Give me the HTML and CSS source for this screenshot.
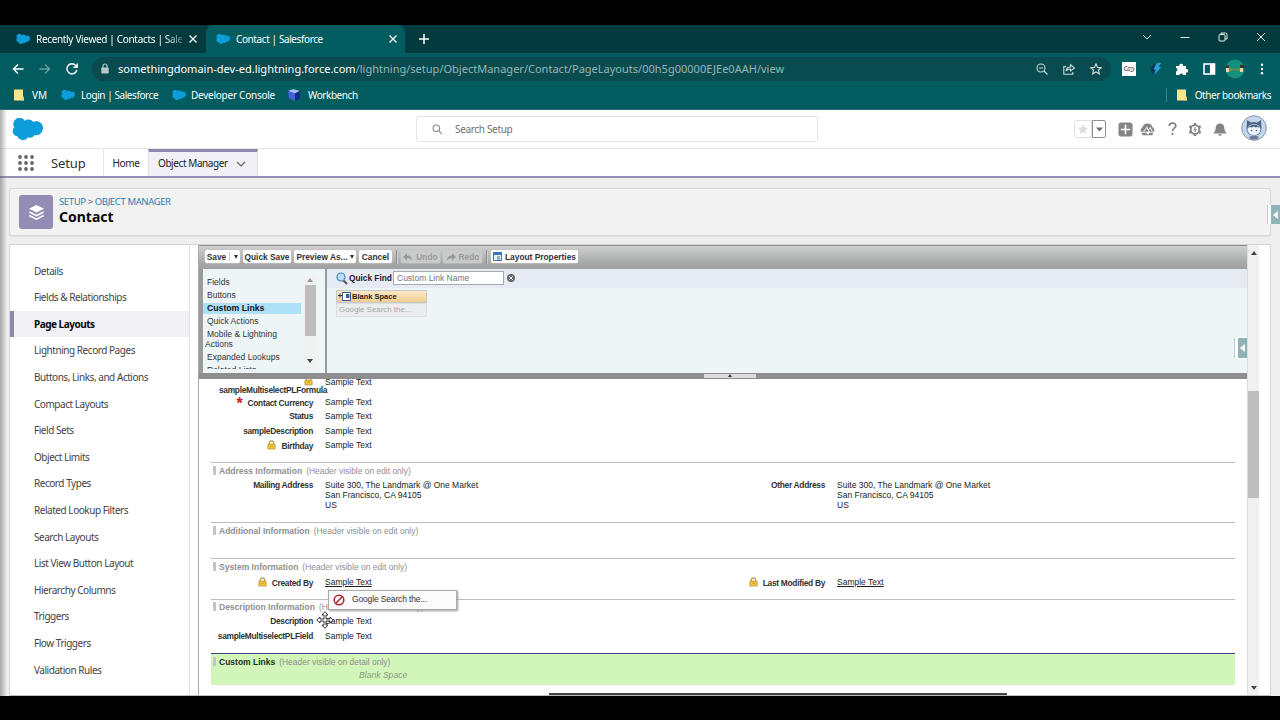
FILE: index.html
```html
<!DOCTYPE html>
<html lang="en">
<head>
<meta charset="utf-8">
<title>Contact | Salesforce</title>
<link rel="stylesheet" href="styles.css">
</head>
<body>
<svg class="defs" aria-hidden="true">
  <symbol id="cloud" viewBox="0 0 30 21"><path d="M12.4 2.4A6 6 0 0 1 20.500 3.500A6.800 6.800 0 0 1 30 9.700A6.700 6.700 0 0 1 21.800 16.300A5 5 0 0 1 15.500 18.400A5.700 5.700 0 0 1 5.300 17.600A5.200 5.200 0 0 1 2.200 8.800A6 6 0 0 1 12.400 2.400Z" fill="#0d9dda"/></symbol>
  <symbol id="lock" viewBox="0 0 10 11"><path d="M2.500 5V3.500a2.500 2.500 0 0 1 5 0V5" fill="none" stroke="#b99a48" stroke-width="1.300"/><rect x="1" y="4.500" width="8" height="5.500" rx=".6" fill="#f2c93a" stroke="#b58b25" stroke-width=".8"/><path d="M3 7h4" stroke="#b58b25" stroke-width=".7"/></symbol>
  <symbol id="x" viewBox="0 0 10 10"><path d="M1.500 1.500l7 7m0-7l-7 7" stroke="currentColor" stroke-width="1.300"/></symbol>
  <symbol id="folder" viewBox="0 0 12 12"><path d="M1 .5h9v7l1 .5v3.500H1z" fill="#fbe58c"/><path d="M9 11.500V8h2v3.500z" fill="#f3cf55"/></symbol>
</svg>
<div class="screen">
  <div class="tabs">
    <div class="tab"><svg class="fav"><use href="#cloud"/></svg><span class="tab-title fade">Recently Viewed | Contacts | Sale</span><svg class="close"><use href="#x"/></svg></div>
    <div class="tab active"><svg class="fav"><use href="#cloud"/></svg><span class="tab-title">Contact | Salesforce</span><svg class="close"><use href="#x"/></svg></div>
    <svg class="plus" viewBox="0 0 10 10"><path d="M5 0v10M0 5h10" stroke="#fff" stroke-width="1.500"/></svg>
    <div class="win">
      <svg width="10" height="10" viewBox="0 0 10 10"><path d="M1 3l4 4 4-4"/></svg>
      <svg width="10" height="10" viewBox="0 0 10 10"><path d="M.5 5.500h9"/></svg>
      <svg width="10" height="10" viewBox="0 0 10 10"><rect x="1" y="2.500" width="6" height="6.500" rx="1"/><path d="M3 2.500V1h4.500q1.500 0 1.500 1.500V7H7"/></svg>
      <svg width="10" height="10" viewBox="0 0 10 10"><path d="M1 1l8 8m0-8l-8 8"/></svg>
    </div>
  </div>
  <div class="toolbar">
    <svg class="nav-i" viewBox="0 0 12 12"><path d="M11.500 6H1.500M6 1.500L1.500 6 6 10.500"/></svg>
    <svg class="nav-i dim" viewBox="0 0 12 12"><path d="M.5 6h10M6 1.500L10.500 6 6 10.500"/></svg>
    <svg class="nav-i" viewBox="0 0 12 12"><path d="M10.800 7A5 5 0 1 1 9.800 2.600L11 4M11.200.5V4.300H7.400"/></svg>
    <div class="omni">
      <svg width="8" height="11" viewBox="0 0 8 11"><path d="M2 5V3a2 2 0 0 1 4 0v2" fill="none" stroke="#b5c7c8" stroke-width="1.200"/><rect x=".3" y="4.500" width="7.400" height="6" rx=".8" fill="#b5c7c8"/></svg>
      <span class="url"><span class="host">somethingdomain-dev-ed.lightning.force.com</span><span class="path">/lightning/setup/ObjectManager/Contact/PageLayouts/00h5g00000EJEe0AAH/view</span></span>
      <div class="omni-i">
        <svg viewBox="0 0 12 12"><circle cx="5" cy="5" r="4"/><path d="M8 8l3.500 3.500M3 5h4"/></svg>
        <svg viewBox="0 0 12 12"><path d="M3 3.500H.8v7.700h9V9M3 8c.4-3 2-4 4.500-4V1.700L11.500 5 7.500 8V6C5.500 6 4 6.500 3 8z"/></svg>
        <svg viewBox="0 0 12 12"><path d="M6 .8l1.500 3.600 3.900.3-3 2.500 1 3.800L6 9l-3.400 2 1-3.800-3-2.500 3.900-.3z"/></svg>
      </div>
    </div>
    <div class="exts">
      <svg viewBox="0 0 14 14"><rect width="14" height="14" fill="#fff"/><path d="M5.500 4.500H4Q1.800 4.800 2 7q.3 1.800 2.500 1.500L8 8M8.500 9.500H10q2.200-.3 2-2.500-.2-1.800-2.500-1.500L6 6" fill="none" stroke="#555" stroke-width=".9"/><path d="M4 7.200l4-2M6 9l4-2" fill="none" stroke="#c66" stroke-width=".6"/></svg>
      <svg viewBox="0 0 14 14"><path d="M6 1L2 5v5l3 2z" fill="#0c3553"/><path d="M8 1h4L9.500 5H12L5.500 13 7 7.500H4.500z" fill="#2aa3e4"/></svg>
      <svg viewBox="0 0 14 14"><path d="M1 4h3.500a1.800 1.800 0 1 1 3.500 0H11v3a1.800 1.800 0 1 1 0 3.500V13H8a1.800 1.800 0 0 0-3.500 0H1V9.500A1.800 1.800 0 0 0 1 6z" fill="#fff"/></svg>
      <svg viewBox="0 0 14 14"><rect x="2" y="2" width="10.500" height="10" fill="none" stroke="#fff" stroke-width="1.600"/><path d="M8 2h4.500v10H8z" fill="#fff"/></svg>
      <svg class="avatar-s" viewBox="0 0 20 20"><circle cx="10" cy="10" r="9.500" fill="#15907a"/><path d="M3 8l7 2 7-2v5l-7-2-7 2z" fill="#5f8f55"/><path d="M1 9h3v4H1zM15 9h3v4h-3z" fill="#e4d7a0"/><path d="M1 6.500h3V9H1zM15 6h4v3h-4z" fill="#33362c"/></svg>
      <svg viewBox="0 0 14 14"><g fill="#fff"><circle cx="7" cy="2.700" r="1.200"/><circle cx="7" cy="7" r="1.200"/><circle cx="7" cy="11.300" r="1.200"/></g></svg>
    </div>
  </div>
  <div class="bookmarks">
    <svg class="bi"><use href="#folder"/></svg><span class="bm b1">VM</span>
    <svg class="fav"><use href="#cloud"/></svg><span class="bm b2">Login | Salesforce</span>
    <svg class="fav"><use href="#cloud"/></svg><span class="bm b3">Developer Console</span>
    <svg class="bi" viewBox="0 0 12 12"><path d="M0 2l5-2 7 2-5 2.500z" fill="#aebbf0"/><path d="M0 2l7 2.500V12L1 9.500z" fill="#3f63da"/><path d="M7 4.500L12 2v7l-5 3z" fill="#132b8c"/></svg><span class="bm b4">Workbench</span>
    <span class="other"><svg class="bi"><use href="#folder"/></svg><span class="bm b5">Other bookmarks</span></span>
  </div>

  <div class="page">
    <header class="top">
      <svg class="logo"><use href="#cloud"/></svg>
      <div class="search"><svg width="11" height="11" viewBox="0 0 11 11"><circle cx="4.300" cy="4.300" r="3.300"/><path d="M6.800 6.800L10 10"/></svg><span>Search Setup</span></div>
      <div class="acts">
        <div class="fav-box"><span class="star"><svg width="12" height="12" viewBox="0 0 12 12"><path d="M6 .8l1.500 3.600 3.900.3-3 2.500 1 3.800L6 9l-3.400 2 1-3.800-3-2.500 3.900-.3z" fill="#dcdcdc"/></svg></span><span class="dd"><svg width="7" height="5" viewBox="0 0 7 5"><path d="M0 .5h7L3.500 4.500z" fill="#6e6e6e"/></svg></span></div>
        <svg class="a1" viewBox="0 0 16 16"><rect x=".5" y=".5" width="15" height="15" rx="3" fill="#858585"/><path d="M8 3v10M3 8h10" stroke="#fff" stroke-width="1.700"/></svg>
        <svg class="a2" viewBox="0 0 16 16"><path d="M1 10.500Q0 7 3 5 4 1.500 8 1.500t5 3.500q3 2 2 5.500z" fill="#858585"/><path d="M4 10l3-4 2 2.500L11 6l2 4M7 5l3 6" fill="none" stroke="#fff" stroke-width="1"/><path d="M1.500 11.500h5l2 2 2-2h4l-1.500 2.500h-10z" fill="#858585"/></svg>
        <svg class="a3" viewBox="0 0 10 16"><path d="M1.200 4.500Q1.400 1.300 5 1.300t3.800 3.200C8.800 7 5 7 5 10.500" fill="none" stroke="#858585" stroke-width="1.900"/><circle cx="5" cy="13.700" r="1.300" fill="#858585"/></svg>
        <svg class="a4" viewBox="0 0 16 16"><circle cx="8" cy="8" r="5" fill="none" stroke="#858585" stroke-width="2.200"/><path d="M8 .5v3M8 12.500v3M1.500 4.200l2.600 1.500M11.900 10.300l2.600 1.500M14.500 4.200l-2.600 1.500M4.100 10.300l-2.600 1.500" stroke="#858585" stroke-width="2.800"/><path d="M8.700 5.300L7 8.300h2.200L7.700 10.800" fill="none" stroke="#858585" stroke-width="1.200"/></svg>
        <svg class="a5" viewBox="0 0 16 16"><path d="M1 11.500q2-1.500 2-5C3 3 5 1 8 1s5 2 5 5.500q0 3.500 2 5v1H1zM6 13.500h4q-.5 2-2 2t-2-2z" fill="#858585"/></svg>
        <svg class="avatar" viewBox="0 0 26 26"><circle cx="13" cy="13" r="12.300" fill="#c3d7ee" stroke="#8c929e"/><path d="M6 5l4 2.500q3-1 6 0L20 5l.5 8q0 7.500-7.500 7.500T5.500 13z" fill="#52658a"/><ellipse cx="13" cy="14.500" rx="6.500" ry="5.500" fill="#eef6fb"/><path d="M7 13q2-3.500 6-3.500t6 3.500l-2.500-1-2 .5-1.500-1-2 1-1.500-.5z" fill="#52658a"/><circle cx="10.500" cy="15.500" r=".8" fill="#4a5f86"/><circle cx="15.500" cy="15.500" r=".8" fill="#4a5f86"/><path d="M8 22q5-3 10 0l-2 2.500h-6z" fill="#6c7898"/></svg>
      </div>
    </header>
    <nav class="nav">
      <svg class="waffle" viewBox="0 0 16 16"><g fill="#666"><circle cx="2" cy="2" r="1.900"/><circle cx="8" cy="2" r="1.900"/><circle cx="14" cy="2" r="1.900"/><circle cx="2" cy="8" r="1.900"/><circle cx="8" cy="8" r="1.900"/><circle cx="14" cy="8" r="1.900"/><circle cx="2" cy="14" r="1.900"/><circle cx="8" cy="14" r="1.900"/><circle cx="14" cy="14" r="1.900"/></g></svg>
      <span class="app">Setup</span>
      <span class="n-home">Home</span>
      <span class="n-om"><span>Object Manager</span><svg width="10" height="6" viewBox="0 0 10 6"><path d="M1 1l4 4 4-4" fill="none" stroke="#666" stroke-width="1.200"/></svg></span>
    </nav>
    <div class="body">
      <div class="crumb-card">
        <div class="om-icon"><svg width="17" height="17" viewBox="0 0 17 17"><path d="M8.500 1L16 4.800 8.500 8.500 1 4.800z" fill="#fff"/><path d="M1.300 8l7.200 3.700L15.700 8M1.300 11.500l7.200 3.700 7.200-3.700" fill="none" stroke="#fff" stroke-width="1.500"/></svg></div>
        <div class="crumb"><div class="trail">SETUP <i>&gt;</i> OBJECT MANAGER</div><h1>Contact</h1></div>
      </div>
      <div class="cols">
        <aside class="side">
          <a>Details</a><a>Fields &amp; Relationships</a><a class="on">Page Layouts</a><a>Lightning Record Pages</a><a>Buttons, Links, and Actions</a><a>Compact Layouts</a><a>Field Sets</a><a>Object Limits</a><a>Record Types</a><a>Related Lookup Filters</a><a>Search Layouts</a><a>List View Button Layout</a><a>Hierarchy Columns</a><a>Triggers</a><a>Flow Triggers</a><a>Validation Rules</a>
        </aside>
        <main class="frame">
          <div class="editor">
            <div class="ed-bar">
              <span class="btn w1">Save <i class="sep"></i><i class="car"></i></span><span class="btn w2">Quick Save</span><span class="btn w3">Preview As...<i class="car"></i></span><span class="btn w4">Cancel</span><i class="vr"></i>
              <span class="btn off w5"><svg width="10" height="9" viewBox="0 0 10 9"><path d="M0 5l4-4v2.500q5 0 5 5-2-3-5-2.500V8.500z" fill="#999"/></svg>Undo</span><span class="btn off w6"><svg width="10" height="9" viewBox="0 0 10 9"><path d="M10 5L6 1v2.500q-5 0-5 5Q3 5.500 6 6v2.500z" fill="#999"/></svg>Redo</span><i class="vr"></i>
              <span class="btn w7"><svg width="9" height="9" viewBox="0 0 9 9"><rect x=".5" y=".5" width="8" height="8" fill="#e8f1fb" stroke="#3f74b8"/><path d="M0 0h9v3H0z" fill="#3f74b8"/><path d="M4 4h3v4H4z" fill="#8ab1dd"/></svg>Layout Properties</span>
            </div>
            <div class="pal">
              <div class="pal-list">
                <div class="pal-items"><div>Fields</div><div>Buttons</div><div class="sel">Custom Links</div><div>Quick Actions</div><div class="two">Mobile &amp; Lightning<br><span>Actions</span></div><div>Expanded Lookups</div><div class="cut">Related Lists</div></div>
                <div class="mini-sb"><i class="up lt"></i><i class="th"></i><i class="dn"></i></div>
              </div>
              <div class="pal-main">
                <div class="qf"><svg width="12" height="13" viewBox="0 0 12 13"><path d="M7 8l4 4" stroke="#555" stroke-width="2.200"/><circle cx="5" cy="5" r="4" fill="#b9e0f8" stroke="#4b87ba" stroke-width="1.200"/></svg><b>Quick Find</b><span class="inp">Custom Link Name</span><svg class="clr" width="8" height="8" viewBox="0 0 8 8"><circle cx="4" cy="4" r="4" fill="#666"/><path d="M2.300 2.300l3.400 3.400m0-3.400L2.300 5.700" stroke="#fff"/></svg></div>
                <div class="chip"><svg width="13" height="9" viewBox="0 0 13 9"><path d="M0 3.500h4M2 1.500v4" stroke="#333"/><rect x="4.500" y=".5" width="8" height="8" fill="#fff" stroke="#36639c"/><path d="M8 2h3.500v4H8z" fill="#36639c"/></svg>Blank Space</div>
                <div class="chip used">Google Search the...</div>
                <div class="flap in"><i></i></div>
              </div>
            </div>
            <div class="grip"><span><i></i></span></div>
            <div class="layout">
              <div class="sec s0">
                <div class="row r1"><span class="l lk"><svg><use href="#lock"/></svg><em>sampleMultiselectPLFormula</em></span><span class="v">Sample Text</span></div>
                <div class="row r2"><span class="l n"><b class="req">*</b>Contact Currency</span><span class="v">Sample Text</span></div>
                <div class="row r3"><span class="l">Status</span><span class="v">Sample Text</span></div>
                <div class="row r4"><span class="l">sampleDescription</span><span class="v">Sample Text</span></div>
                <div class="row r5"><span class="l n"><svg><use href="#lock"/></svg>Birthday</span><span class="v">Sample Text</span></div>
              </div>
              <div class="sec s1"><h2><b>Address Information</b> <span>(Header visible on edit only)</span></h2>
                <div class="row"><span class="l">Mailing Address</span><span class="v addr">Suite 300, The Landmark @ One Market<br>San Francisco, CA 94105<br>US</span><span class="l">Other Address</span><span class="v addr">Suite 300, The Landmark @ One Market<br>San Francisco, CA 94105<br>US</span></div></div>
              <div class="sec s2"><h2><b>Additional Information</b> <span>(Header visible on edit only)</span></h2></div>
              <div class="sec s3"><h2><b>System Information</b> <span>(Header visible on edit only)</span></h2>
                <div class="row"><span class="l n"><svg><use href="#lock"/></svg>Created By</span><span class="v"><u>Sample Text</u></span><span class="l n"><svg><use href="#lock"/></svg>Last Modified By</span><span class="v"><u>Sample Text</u></span></div></div>
              <div class="sec s4"><h2><b>Description Information</b> <span>(Header visible on edit only)</span></h2>
                <div class="row d1"><span class="l">Description</span><span class="v">Sample Text</span></div>
                <div class="row d2"><span class="l">sampleMultiselectPLField</span><span class="v">Sample Text</span></div></div>
              <div class="sec s5"><h2><b>Custom Links</b> <span>(Header visible on detail only)</span></h2><div class="blank">Blank Space</div></div>
              <div class="nextbox"></div>
            </div>
          </div>
          <div class="sb"><i class="up"></i><i class="thumb"></i><i class="dn"></i></div>
        </main>
      </div>
      <div class="flap out"><i></i></div>
    </div>
  </div>
  <div class="drag"><svg width="12" height="12" viewBox="0 0 12 12"><circle cx="6" cy="6" r="4.800" fill="#fff" stroke="#b5242c" stroke-width="1.500"/><path d="M2.700 9.300l6.600-6.600" stroke="#b5242c" stroke-width="1.500"/></svg><span>Google Search the...</span></div>
  <svg class="cursor" viewBox="0 0 18 18"><path d="M9 .7l3 3.300h-2v4h4V6l3.300 3-3.300 3v-2h-4v4h2l-3 3.300L6 14h2v-4H4v2L.7 9 4 6v2h4V4H6z" fill="#fff" stroke="#222" stroke-width=".9"/></svg>
</div>
</body>
</html>
```
FILE: styles.css
```css
* { box-sizing: border-box; }
body { margin: 0; background: #000; font-family: "Noto Sans", sans-serif; }
.defs { position: absolute; width: 0; height: 0; }
.screen { position: relative; width: 1280px; height: 720px; padding: 25px 0 24px; display: flex; flex-direction: column; background: #000; overflow: hidden; white-space: nowrap; }
svg { display: block; flex: none; }
i { font-style: normal; }

.tabs { height: 28px; background: #023a3d; display: flex; align-items: stretch; color: #fff; }
.tab { width: 206px; padding: 0 7px 0 16px; display: flex; align-items: center; font-size: 10px; border-radius: 7px 7px 0 0; }
.tab.active { width: 199px; padding: 0 7px 0 10px; background: #035c60; }
.fav { width: 14px; height: 10px; }
.tab-title { flex: 1; margin-left: 6px; overflow: hidden; letter-spacing: -.4px; }
.tab:not(.active) .tab-title { flex: none; width: 146px; margin-right: 6px; letter-spacing: -.33px; }
.fade { -webkit-mask-image: linear-gradient(90deg, #000 88%, rgba(0,0,0,.3)); mask-image: linear-gradient(90deg, #000 88%, rgba(0,0,0,.3)); }
.close { width: 10px; height: 10px; }
.plus { width: 10px; height: 10px; margin: 9px 0 0 14px; }
.win { margin: 7px 14px 0 auto; display: flex; gap: 28px; }
.win svg { fill: none; stroke: #e3eeee; stroke-width: 1; }

.toolbar { height: 31px; background: #035c60; display: flex; align-items: center; padding-left: 12px; }
.nav-i { width: 12px; height: 12px; margin-right: 15px; fill: none; stroke: #fff; stroke-width: 1.400; }
.nav-i.dim { stroke: #6b9fa1; }
.omni { width: 1019px; height: 24px; margin-left: -1px; border-radius: 12px; background: #0a4b4f; display: flex; align-items: center; padding: 0 9px 0 9px; }
.url { margin-left: 9px; font-size: 11px; color: #95b5b7; flex: 1; letter-spacing: .01px; }
.host { color: #fff; }
.omni-i { display: flex; gap: 15px; }
.omni-i svg { width: 12px; height: 12px; fill: none; stroke: #cddcdc; stroke-width: 1.100; }
.exts { display: flex; align-items: center; gap: 12.500px; margin-left: 11px; }
.exts svg { width: 14px; height: 14px; }
.exts .avatar-s { width: 20px; height: 20px; margin: 0 -3px; }

.bookmarks { height: 26px; background: #035c60; border-bottom: 1px solid #2b6f77; display: flex; align-items: center; padding: 0 9px 3px 13px; font-size: 10px; letter-spacing: -.43px; color: #fff; }
.bi { width: 12px; height: 12px; }
.bm { margin-left: 6px; }
.b1 { width: 29px; margin-left: 7px; letter-spacing: 0; }
.b2 { width: 91px; }
.b3 { width: 97px; margin-left: 5px; letter-spacing: -.25px; }
.b4 { margin-left: 8px; }
.other { margin-left: auto; display: flex; align-items: center; border-left: 1px solid #3c7e82; padding-left: 9px; height: 14px; }
.b5 { margin-left: 7px; }

.page { flex: 1; min-height: 0; display: flex; flex-direction: column; background: #fff; position: relative; overflow: hidden; }
.page::before { content: ""; position: absolute; z-index: 3; left: 0; top: 0; bottom: 0; width: 7px; background: linear-gradient(90deg, rgba(80,80,80,.45), rgba(80,80,80,0)); }
.top { height: 39px; border-bottom: 1px solid #e6e6e6; display: flex; align-items: center; padding-left: 12px; flex: none; }
.logo { width: 31px; height: 22px; }
.search { width: 402px; height: 26px; margin-left: 373px; border: 1px solid #e4e4e4; border-radius: 3px; display: flex; align-items: center; padding-left: 15px; font-size: 10px; color: #6f6f6f; letter-spacing: -.33px; }
.search svg { fill: none; stroke: #8a8a8a; stroke-width: 1.100; margin-right: 12px; }
.acts { display: flex; align-items: center; margin-left: 256px; }
.fav-box { display: flex; height: 18px; }
.star, .dd { display: flex; align-items: center; justify-content: center; border: 1px solid #e0e0e0; width: 18px; border-radius: 3px 0 0 3px; }
.dd { width: 14px; border-color: #8f8f8f; border-radius: 0 2px 2px 0; }
.a1, .a2, .a4, .a5 { width: 15px; height: 15px; }
.a1 { margin-left: 12px; }
.a2 { margin-left: 7px; }
.a3 { width: 9px; height: 14px; margin-left: 13px; }
.a4 { margin-left: 11px; width: 14px; }
.a5 { margin-left: 11px; width: 14px; }
.avatar { width: 26px; height: 26px; margin: -2px 0 0 14px; }

.nav { height: 29px; flex: none; border-bottom: 2px solid #9590b3; display: flex; padding-left: 18px; font-size: 10px; color: #222; line-height: 29px; letter-spacing: -.42px; }
.waffle { width: 16px; height: 16px; margin-top: 6px; }
.app { margin-left: 17px; width: 53px; font-size: 13px; letter-spacing: -.1px; color: #333; border-right: 1px solid #e6e6e6; }
.n-home { width: 44px; text-align: center; }
.n-om { width: 110px; padding: 0 11px 0 9px; background: #f1f0f6; border: 1px solid #e0dfe8; border-top: 3px solid #8e88ae; border-bottom: 0; display: flex; justify-content: space-between; align-items: center; line-height: 20px; }
.n-om > span { margin-top: -2px; }
.body { flex: 1; min-height: 0; background: #eeeeef; padding: 10px 9px 0; display: flex; flex-direction: column; position: relative; }
.crumb-card { height: 48px; flex: none; background: #f2f2f2; border: 1px solid #d9d9d9; border-radius: 3px; box-shadow: 0 1px 1px #ddd; display: flex; align-items: center; padding-left: 9px; }
.om-icon { width: 34px; height: 34px; background: #938db5; border-radius: 3px; display: flex; align-items: center; justify-content: center; }
.crumb { margin: -4px 0 0 6px; }
.trail { font-size: 9.500px; line-height: 13px; color: #2c7fae; letter-spacing: -.38px; }
.trail i { color: #555; }
h1 { margin: 0; font-size: 14px; line-height: 18px; color: #080808; }
.cols { flex: 1; min-height: 0; margin-top: 8px; display: flex; background: #fff; border: 1px solid #d6d6d6; border-bottom-color: #bbb; }
.side { width: 180px; flex: none; border-right: 1px solid #e2e2e2; padding-top: 12.500px; font-size: 10px; color: #444; }
.side a { display: block; height: 26.620px; line-height: 26px; padding-left: 24px; letter-spacing: -.46px; }
.side .on { background: #f2f1f6; box-shadow: inset 4px 0 #8e88ae; color: #080808; font-weight: 700; letter-spacing: -.5px; }
.frame { flex: 1; margin: 0 11px 0 8px; display: flex; min-width: 0; overflow: hidden; font-family: "Liberation Sans", Arial, sans-serif; border-left: 1px solid #aaa; }
.editor { width: 1048px; overflow: hidden; }

.ed-bar { height: 24px; background: linear-gradient(#cfcfcf, #a9abab 70%, #a0a2a2); border-top: 1px solid #8e8e8e; display: flex; align-items: center; padding: 0 0 2px 6px; font-size: 8.350px; font-weight: 700; color: #333; }
.btn { height: 13px; background: #fff; border-radius: 2px; display: flex; align-items: center; justify-content: center; margin-right: 3px; box-shadow: 0 0 0 .5px #c4c4c4; }
.w1 { width: 35px; } .w2 { width: 48px; } .w3 { width: 62px; } .w4 { width: 33px; } .w5 { width: 39px; } .w6 { width: 39px; } .w7 { width: 87px; }
.btn svg { margin-right: 3px; }
.btn.off { background: #c9caca; color: #9a9a9a; }
.sep { width: 1px; height: 9px; background: #ccc; margin: 0 2px 0 3px; }
.car { border: 2.500px solid transparent; border-top: 4px solid #333; border-bottom: 0; margin-left: 2px; }
.vr { width: 1px; height: 14px; background: #8e8e8e; margin: 0 4px 0 1px; box-shadow: 1px 0 #ccc; }
.pal { height: 104px; display: flex; background: #edf5f7; border-left: 4px solid #9b9b9b; }
.pal-list { width: 124px; flex: none; display: flex; border-right: 2px solid #9a9a9a; padding: 7px 9px 0 0; overflow: hidden; }
.pal-items { width: 98px; font-size: 8.500px; color: #333; }
.pal-items div { height: 13px; line-height: 13px; padding-left: 4px; overflow: hidden; }
.pal-items .sel { background: #aee1f8; font-weight: 700; color: #111; height: 11px; line-height: 11px; margin: 1px 0; font-size: 8.700px; }
.pal-items .two { height: 23px; line-height: 10px; padding-top: 1px; }
.pal-items .two span { margin-left: -2px; }
.pal-items .cut { height: 5px; }
.mini-sb { width: 12px; margin-left: auto; height: 94px; background: #f0f2f2; display: flex; flex-direction: column; align-items: center; }
.up, .dn { border: 3px solid transparent; width: 0; height: 0; }
.up { border-bottom: 4px solid #444; border-top: 0; }
.up.lt { border-bottom-color: #999; margin-top: 2px; }
.dn { border-top: 4px solid #444; border-bottom: 0; margin-top: auto; margin-bottom: 7px; }
.th { width: 11px; height: 51px; margin-top: 3px; background: #bcbcbc; }
.pal-main { flex: 1; position: relative; }
.qf { height: 19px; background: #e6eaf3; display: flex; align-items: center; padding: 0 0 1px 9px; font-size: 8.300px; color: #222; }
.qf b { margin-left: 1px; width: 44px; }
.qf .inp { width: 111px; height: 14px; background: #fff; border: 1px solid #aaa; padding-left: 3px; line-height: 12px; font-size: 8.500px; color: #777; }
.clr { margin-left: 3px; }
.chip { margin: 2px 0 0 9px; width: 91px; height: 13px; background: linear-gradient(#fbe8c8, #f3cd92); border: 1px solid #c9c9c9; font-size: 7.500px; font-weight: 700; color: #222; display: flex; align-items: center; padding: 0 0 1px 1px; }
.chip svg { margin-right: 1px; }
.chip.used { margin-top: 0; height: 14px; background: #e9eded; border-color: #dbdfdf; color: #aaa; font-weight: 400; font-size: 7.900px; padding-left: 2px; }
.flap { position: absolute; background: #8fb3b6; display: flex; align-items: center; justify-content: center; }
.flap i { border: 4px solid transparent; border-right: 5px solid #fff; border-left: 0; }
.flap.in { right: 0; top: 69px; width: 9px; height: 20px; outline: 1px solid #fff; box-shadow: -3px 0 #f7fbfb, -4px 0 #bcd; }
.flap.out { right: 0; top: 27px; width: 9px; height: 19px; box-shadow: -3px 0 #fafafa, -4px 0 #ccc; }
.grip { height: 6px; background: #8d8f8f; display: flex; justify-content: center; }
.grip span { width: 52px; height: 4px; margin: 1px 0 0 13px; background: #ddd; display: flex; justify-content: center; }
.grip i { border: 2.500px solid transparent; border-bottom: 3px solid #333; border-top: 0; height: 0; }

.layout { padding: 0 12px 0 12px; font-size: 8.500px; color: #222; height: 317px; overflow: hidden; }
.sec { border-top: 1px solid #bdbdbd; overflow: hidden; }
.s0 { border: 0; height: 83px; }
.s1 { height: 60px; } .s2 { height: 36px; } .s3 { height: 41px; } .s4 { height: 54px; } .s5 { height: 32px; background: #d2f5b9; border-top: 1px solid #3f4384; }
.row { display: grid; grid-template-columns: 102px 386px 102px 1fr; column-gap: 12px; line-height: 10px; }
.l { text-align: right; font-weight: 700; display: flex; justify-content: flex-end; align-items: center; height: 10px; font-size: 8.400px; letter-spacing: -.3px; color: #333; }
.l svg { width: 9px; height: 10px; margin: -3px 5px 0 0; }
.l.n { margin-top: 1px; }
.r1 { height: 18px; }
.r1 .v { margin-top: -2px; }
.l.lk { display: block; position: relative; height: 18px; }
.lk svg { margin: -3px 0 0 auto; }
.lk em { font-style: normal; display: block; margin-left: 8px; text-align: left; margin-top: -1px; }
.r2 { height: 14px; } .r3 { height: 15px; } .r4 { height: 14px; }
.req { color: #d11a1a; font-size: 16px; line-height: 12px; height: 10px; margin-right: 5px; }
h2 { margin: 0; font-size: 8.500px; line-height: 10px; height: 17px; padding-top: 3px; color: #8f8f8f; display: flex; gap: 4px; }
h2::before { content: ""; width: 3px; height: 9px; background: #c4c4c4; margin: 0 -1px 0 2px; }
h2 span { font-size: 8.450px; font-weight: 400; }
.s4 h2 { padding-top: 2px; height: 16px; }
.s5 b { color: #223318; }
.s3 .row { padding-top: 1px; }
.d2 { margin-top: 5px; }
.blank { margin: 0 0 0 148px; line-height: 9px; font-style: italic; font-size: 8.600px; color: #8a9a80; }
.nextbox { width: 458px; height: 12px; margin: 8px 0 0 338px; border: 2px solid #444; }
.sb { width: 12px; background: #f0f0f0; display: flex; flex-direction: column; align-items: center; border-left: 1px solid #ddd; }
.sb .up { margin-top: 6px; }
.thumb { width: 11px; height: 107px; background: #bebebe; margin-top: 136px; }
.sb .dn { margin-bottom: 5px; }

.drag { position: absolute; left: 328px; top: 590px; width: 129px; height: 20px; background: #fbfbfb; border: 1px solid #aaa; box-shadow: 1px 1px 2px #999; display: flex; align-items: center; padding-left: 4px; font: 8.500px "Liberation Sans", Arial, sans-serif; letter-spacing: -.15px; color: #333; }
.drag svg { margin-right: 7px; }
.drag span { margin-top: -2px; }
.cursor { position: absolute; left: 316px; top: 611px; width: 18px; height: 18px; }
```
